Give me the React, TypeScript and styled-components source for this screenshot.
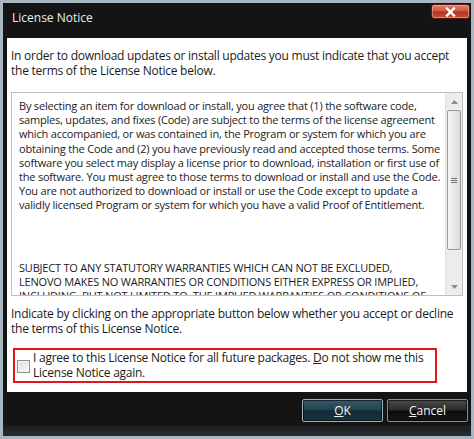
import React from "react";
import styled, { createGlobalStyle } from "styled-components";

const Global = createGlobalStyle`
  html, body { margin: 0; padding: 0; background: #a9b8c2; }
  * { box-sizing: border-box; }
`;

const FONT = `"Open Sans", "Noto Sans", "Liberation Sans", sans-serif`;

const Window = styled.div`
  width: 474px;
  height: 439px;
  border: 3px solid #a7b6c0;
  background: #141414;
  display: flex;
  flex-direction: column;
  font-family: ${FONT};
`;

const TitleBar = styled.div`
  height: 35px;
  display: flex;
  align-items: flex-start;
  justify-content: space-between;
  padding: 0 1px 0 9px;
`;

const Title = styled.div`
  color: #ececec;
  font-size: 12px;
  line-height: 14px;
  margin-top: 8px;
`;

const CloseButton = styled.div`
  width: 39px;
  height: 15px;
  margin-top: 1px;
  border: 1px solid #5a1a12;
  border-radius: 3px;
  background: linear-gradient(#e2806f 0%, #cf5544 45%, #b23423 55%, #c4503b 100%);
  box-shadow: inset 0 0 0 1px rgba(255, 200, 190, 0.45);
  display: flex;
  align-items: center;
  justify-content: center;
`;

const Panel = styled.div`
  height: 354px;
  margin: 0 4px;
  background: #ffffff;
  padding: 10px 4px 0 4px;
  color: #1b1b1b;
  font-size: 12px;
  letter-spacing: -0.25px;
`;

const Para = styled.div<{ $top?: number }>`
  line-height: 15px;
  margin-top: ${(p) => p.$top ?? 0}px;
  white-space: nowrap;
`;

const LicenseBox = styled.div`
  margin-top: 14px;
  height: 204px;
  border: 1px solid #b9c0c6;
  display: flex;
  overflow: hidden;
`;

const LicenseText = styled.div`
  flex: 1;
  padding: 6px 0 0 7px;
  font-size: 11px;
  letter-spacing: -0.2px;
  line-height: 14.2px;
  white-space: nowrap;
  overflow: hidden;
`;

const Gap = styled.div<{ $h: number }>`
  height: ${(p) => p.$h}px;
`;

const ScrollBar = styled.div`
  width: 17px;
  background: #ececec;
  border-left: 1px solid #e0e0e0;
  display: flex;
  flex-direction: column;
  align-items: center;
  padding: 0 1px;
`;

const Arrow = styled.div`
  height: 17px;
  display: flex;
  align-items: center;
  justify-content: center;
`;

const Thumb = styled.div`
  width: 14px;
  height: 140px;
  border: 1px solid #9a9a9a;
  border-radius: 2px;
  background: linear-gradient(90deg, #f4f4f4, #dcdcdc);
  display: flex;
  align-items: center;
  justify-content: center;
`;

const Track = styled.div`
  flex: 1;
`;

const Grip = styled.div`
  width: 6px;
  height: 5px;
  border-top: 1px solid #777;
  border-bottom: 1px solid #777;
  position: relative;
  &::after {
    content: "";
    position: absolute;
    left: 0;
    right: 0;
    top: 1px;
    border-top: 1px solid #777;
  }
`;

const AgreeBox = styled.label`
  margin: 12px 0 0 2px;
  width: 424px;
  height: 35px;
  border: 2px solid #e0161f;
  display: flex;
  align-items: flex-start;
  gap: 3px;
  padding: 0 0 0 2px;
`;

const Check = styled.span`
  flex: none;
  width: 13px;
  height: 13px;
  margin-top: 10px;
  border: 1px solid #8e8f8f;
  background: linear-gradient(135deg, #dcdcdc, #fbfbfb);
  box-shadow: inset 0 0 0 1px #f4f4f4;
`;

const AgreeText = styled.span`
  line-height: 15px;
  white-space: nowrap;
`;

const U = styled.span`
  text-decoration: underline;
  text-underline-offset: 1px;
`;

const ButtonRow = styled.div`
  height: 33px;
  display: flex;
  justify-content: flex-end;
  align-items: flex-start;
  gap: 4px;
  padding: 7px 3px 0 0;
`;

const Button = styled.div<{ $primary?: boolean }>`
  width: 81px;
  height: 23px;
  border-radius: 2px;
  border: 1px solid ${(p) => (p.$primary ? "#9fb2bd" : "#8c8c8c")};
  background: ${(p) =>
    p.$primary
      ? "linear-gradient(#3a5866 0%, #22414f 48%, #112a36 52%, #173441 100%)"
      : "linear-gradient(#4a4a4a 0%, #2a2a2a 48%, #0c0c0c 52%, #151515 100%)"};
  box-shadow: inset 0 0 0 1px rgba(0, 0, 0, 0.6);
  color: #f2f2f2;
  font-size: 12px;
  display: flex;
  align-items: center;
  justify-content: center;
`;

const BottomBand = styled.div`
  flex: 1;
  background: linear-gradient(#1b1c1d, #2b2d2e);
`;

const licenseLines = [
  "By selecting an item for download or install, you agree that (1) the software code,",
  "samples, updates, and fixes (Code) are subject to the terms of the license agreement",
  "which accompanied, or was contained in, the Program or system for which you are",
  "obtaining the Code and (2) you have previously read and accepted those terms. Some",
  "software you select may display a license prior to download, installation or first use of",
  "the software. You must agree to those terms to download or install and use the Code.",
  "You are not authorized to download or install or use the Code except to update a",
  "validly licensed Program or system for which you have a valid Proof of Entitlement.",
];

const warrantyLines = [
  "SUBJECT TO ANY STATUTORY WARRANTIES WHICH CAN NOT BE EXCLUDED,",
  "LENOVO MAKES NO WARRANTIES OR CONDITIONS EITHER EXPRESS OR IMPLIED,",
  "INCLUDING, BUT NOT LIMITED TO, THE IMPLIED WARRANTIES OR CONDITIONS OF",
];

export default function App() {
  return (
    <>
      <Global />
      <Window>
        <TitleBar>
          <Title>License Notice</Title>
          <CloseButton>
            <svg width="11" height="10" viewBox="0 0 11 10">
              <path d="M2 1.5 L9 8.5 M9 1.5 L2 8.5" stroke="#ffffff" strokeWidth="2.4" strokeLinecap="square" />
            </svg>
          </CloseButton>
        </TitleBar>
        <Panel>
          <Para>
            In order to download updates or install updates you must indicate that you accept
            <br />
            the terms of the License Notice below.
          </Para>
          <LicenseBox>
            <LicenseText>
              {licenseLines.map((l) => (
                <div key={l}>{l}</div>
              ))}
              <Gap $h={48} />
              {warrantyLines.map((l) => (
                <div key={l}>{l}</div>
              ))}
            </LicenseText>
            <ScrollBar>
              <Arrow>
                <svg width="7" height="4" viewBox="0 0 7 4">
                  <path d="M0 4 L3.5 0 L7 4 Z" fill="#8a8a8a" />
                </svg>
              </Arrow>
              <Thumb>
                <Grip />
              </Thumb>
              <Track />
              <Arrow>
                <svg width="7" height="4" viewBox="0 0 7 4">
                  <path d="M0 0 L3.5 4 L7 0 Z" fill="#8a8a8a" />
                </svg>
              </Arrow>
            </ScrollBar>
          </LicenseBox>
          <Para $top={10}>
            Indicate by clicking on the appropriate button below whether you accept or decline
            <br />
            the terms of this License Notice.
          </Para>
          <AgreeBox>
            <Check />
            <AgreeText>
              I agree to this License Notice for all future packages. <U>D</U>o not show me this
              <br />
              License Notice again.
            </AgreeText>
          </AgreeBox>
        </Panel>
        <ButtonRow>
          <Button $primary>
            <span>
              <U>O</U>K
            </span>
          </Button>
          <Button>
            <span>
              <U>C</U>ancel
            </span>
          </Button>
        </ButtonRow>
        <BottomBand />
      </Window>
    </>
  );
}
